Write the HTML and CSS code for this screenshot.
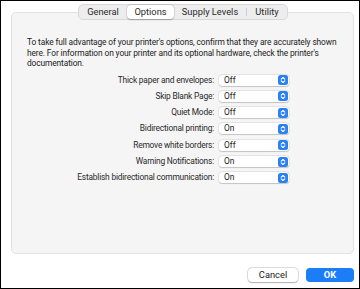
FILE: index.html
```html
<!DOCTYPE html>
<html>
<head>
<meta charset="utf-8">
<link rel="stylesheet" href="styles.css">
</head>
<body>
<div class="window">
  <div class="tabs">
    <span class="tab t1">General</span>
    <span class="tab t2 selected">Options</span>
    <span class="tab t3">Supply Levels</span>
    <span class="sep"></span>
    <span class="tab t4">Utility</span>
  </div>
  <div class="panel">
    <p class="intro">To take full advantage of your printer's options, confirm that they are accurately shown here. For information on your printer and its optional hardware, check the printer's documentation.</p>
    <div class="grid">
      <span class="label">Thick paper and envelopes:</span>
      <span class="popup"><span class="val">Off</span><span class="step"><svg viewBox="0 0 10 10" width="10" height="10"><path d="M3.2 4.1 L5 2.5 L6.8 4.1 M3.2 5.9 L5 7.5 L6.8 5.9" fill="none" stroke="#fff" stroke-width="1.1" stroke-linecap="round" stroke-linejoin="round"/></svg></span></span>
      <span class="label">Skip Blank Page:</span>
      <span class="popup"><span class="val">Off</span><span class="step"><svg viewBox="0 0 10 10" width="10" height="10"><path d="M3.2 4.1 L5 2.5 L6.8 4.1 M3.2 5.9 L5 7.5 L6.8 5.9" fill="none" stroke="#fff" stroke-width="1.1" stroke-linecap="round" stroke-linejoin="round"/></svg></span></span>
      <span class="label">Quiet Mode:</span>
      <span class="popup"><span class="val">Off</span><span class="step"><svg viewBox="0 0 10 10" width="10" height="10"><path d="M3.2 4.1 L5 2.5 L6.8 4.1 M3.2 5.9 L5 7.5 L6.8 5.9" fill="none" stroke="#fff" stroke-width="1.1" stroke-linecap="round" stroke-linejoin="round"/></svg></span></span>
      <span class="label">Bidirectional printing:</span>
      <span class="popup"><span class="val">On</span><span class="step"><svg viewBox="0 0 10 10" width="10" height="10"><path d="M3.2 4.1 L5 2.5 L6.8 4.1 M3.2 5.9 L5 7.5 L6.8 5.9" fill="none" stroke="#fff" stroke-width="1.1" stroke-linecap="round" stroke-linejoin="round"/></svg></span></span>
      <span class="label">Remove white borders:</span>
      <span class="popup"><span class="val">Off</span><span class="step"><svg viewBox="0 0 10 10" width="10" height="10"><path d="M3.2 4.1 L5 2.5 L6.8 4.1 M3.2 5.9 L5 7.5 L6.8 5.9" fill="none" stroke="#fff" stroke-width="1.1" stroke-linecap="round" stroke-linejoin="round"/></svg></span></span>
      <span class="label">Warning Notifications:</span>
      <span class="popup"><span class="val">On</span><span class="step"><svg viewBox="0 0 10 10" width="10" height="10"><path d="M3.2 4.1 L5 2.5 L6.8 4.1 M3.2 5.9 L5 7.5 L6.8 5.9" fill="none" stroke="#fff" stroke-width="1.1" stroke-linecap="round" stroke-linejoin="round"/></svg></span></span>
      <span class="label">Establish bidirectional communication:</span>
      <span class="popup"><span class="val">On</span><span class="step"><svg viewBox="0 0 10 10" width="10" height="10"><path d="M3.2 4.1 L5 2.5 L6.8 4.1 M3.2 5.9 L5 7.5 L6.8 5.9" fill="none" stroke="#fff" stroke-width="1.1" stroke-linecap="round" stroke-linejoin="round"/></svg></span></span>
    </div>
  </div>
  <div class="buttons">
    <span class="btn cancel">Cancel</span>
    <span class="btn ok">OK</span>
  </div>
</div>
</body>
</html>
```

FILE: styles.css
```css
html, body {
  margin: 0;
  padding: 0;
  background: #fff;
}
.window {
  width: 360px;
  height: 289px;
  box-sizing: border-box;
  border: 1px solid #000;
  background: #fff;
  font-family: Roboto, "Liberation Sans", Arial, sans-serif;
  color: #222;
  display: flex;
  flex-direction: column;
  padding: 3px 5px 0 10px;
}
.tabs {
  position: relative;
  z-index: 1;
  align-self: flex-start;
  margin-left: 67px;
  width: 210px;
  height: 16px;
  box-sizing: border-box;
  border: 1px solid #d9d9d9;
  border-radius: 5px;
  background: #ededed;
  display: flex;
  align-items: center;
  padding: 0;
  margin-bottom: -8px;
}
.tab {
  font-size: 9.3px;
  color: #2a2a2a;
  height: 14px;
  line-height: 14px;
  text-align: center;
  white-space: nowrap;
  border-radius: 4px;
}
.t1 { width: 48px; }
.t2 { width: 47px; }
.t3 { width: 72px; }
.t4 { width: 40px; }
.tab.selected {
  background: #fff;
  box-shadow: 0 0 0 0.5px rgba(0,0,0,0.12), 0 0.5px 1.5px rgba(0,0,0,0.25);
}
.sep {
  width: 1px;
  height: 8px;
  background: #d0d0d0;
}
.panel {
  height: 242px;
  box-sizing: border-box;
  background: #f5f5f5;
  border: 1px solid #e2e2e2;
  border-radius: 5px;
  padding: 24px 8px 0 15px;
}
.intro {
  margin: 0;
  font-size: 8.4px;
  letter-spacing: -0.12px;
  line-height: 10.5px;
  color: #222;
}
.grid {
  margin-top: 6px;
  display: grid;
  grid-template-columns: 187px 70px;
  column-gap: 5px;
  row-gap: 5.33px;
  align-items: center;
}
.label {
  text-align: right;
  font-size: 8.4px;
  letter-spacing: -0.2px;
  line-height: 11px;
  color: #2a2a2a;
  white-space: nowrap;
}
.popup {
  height: 11px;
  background: #fff;
  border-radius: 3px;
  box-shadow: 0 0 0 0.5px rgba(0,0,0,0.12), 0 0.5px 1px rgba(0,0,0,0.15);
  display: flex;
  align-items: center;
  justify-content: space-between;
  padding: 0 1px 0 5px;
  font-size: 8.4px;
}
.val { line-height: 11px; color: #222; }
.step {
  width: 10px;
  height: 10px;
  border-radius: 2.5px;
  background: #2a80f5;
  display: flex;
}
.buttons {
  display: flex;
  justify-content: flex-end;
  gap: 8px;
  margin-top: 14px;
}
.btn {
  height: 14px;
  line-height: 14px;
  border-radius: 4px;
  text-align: center;
  font-size: 9.3px;
}
.cancel {
  width: 50px;
  background: #fff;
  color: #222;
  box-shadow: 0 0 0 0.5px rgba(0,0,0,0.2), 0 0.5px 1.5px rgba(0,0,0,0.25);
}
.ok {
  width: 48px;
  background: #1b7ef7;
  color: #fff;
  font-weight: bold;
}
```
